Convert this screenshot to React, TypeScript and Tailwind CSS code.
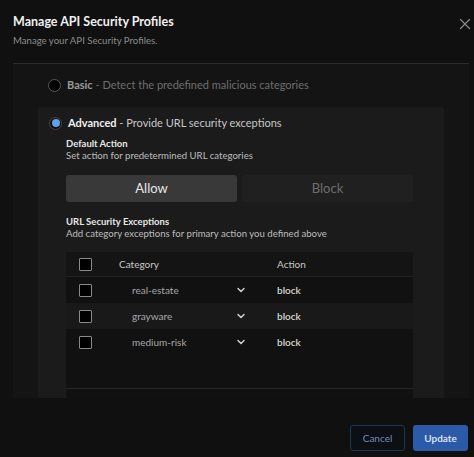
import { ChevronDown, X } from "lucide-react";

const rows = [
  { name: "real-estate", action: "block", bg: "bg-[#111111]" },
  { name: "grayware", action: "block", bg: "bg-[#191919]" },
  { name: "medium-risk", action: "block", bg: "bg-[#111111]" },
];

function Checkbox() {
  return <span className="block w-[13px] h-[13px] border border-[#8a8a8a] bg-black rounded-[1px]" />;
}

export default function App() {
  return (
    <div className="w-[474px] h-[457px] bg-[#101010] text-white flex flex-col overflow-hidden font-['Lato','Open_Sans',sans-serif]">
      <div className="shrink-0 flex items-start justify-between pl-[13px] pr-0 pt-[13px]">
        <div>
          <h1 className="text-[12.5px] font-bold leading-[18px] text-[#f0f0f0]">Manage API Security Profiles</h1>
          <p className="text-[9.6px] leading-[14px] mt-[3px] text-[#8c8c8c]">Manage your API Security Profiles.</p>
        </div>
        <X size={18} strokeWidth={1.6} className="text-[#8a8a8a] mt-[2px]" />
      </div>

      <div className="shrink-0 mt-[15px] ml-[13px] mr-[5px] h-[335px] border-t border-[#2c2c2c] bg-[#141414] flex flex-col overflow-hidden">
        <div className="shrink-0 flex items-center gap-[6px] pl-[35px] h-[43px]">
          <span className="w-[13px] h-[13px] rounded-full bg-black border border-[#5a5a5a]" />
          <span className="text-[11px] text-[#6e6e6e]">
            <span className="font-bold text-[#9a9a9a]">Basic</span> - Detect the predefined malicious categories
          </span>
        </div>

        <div className="shrink-0 ml-[25px] mr-[25px] h-[300px] bg-[#1b1b1b] rounded-t-[3px] pt-[8px] flex flex-col">
          <div className="shrink-0 flex items-center gap-[6px] pl-[11px] h-[16px]">
            <span className="w-[13px] h-[13px] rounded-full border-[1.5px] border-[#5a4432] bg-[#0d0d0d] flex items-center justify-center">
              <span className="w-[8px] h-[8px] rounded-full bg-[#5aa2f2]" />
            </span>
            <span className="text-[11px] text-[#c8c8c8]">
              <span className="font-bold text-[#f0f0f0]">Advanced</span> - Provide URL security exceptions
            </span>
          </div>

          <div className="pl-[28px] pr-[31px] mt-[6px]">
            <div className="text-[9.5px] font-bold leading-[13px] text-[#e6e6e6]">Default Action</div>
            <div className="text-[9.6px] leading-[12px] text-[#bdbdbd]">Set action for predetermined URL categories</div>

            <div className="mt-[13px] flex gap-[5px] h-[27px]">
              <div className="flex-1 rounded-[3px] bg-[#393939] flex items-center justify-center text-[13px] text-[#e8e8e8]">Allow</div>
              <div className="flex-1 rounded-[3px] bg-[#202020] flex items-center justify-center text-[13px] text-[#6e6e6e]">Block</div>
            </div>

            <div className="mt-[13px] text-[9.5px] font-bold leading-[13px] text-[#e6e6e6]">URL Security Exceptions</div>
            <div className="text-[9.6px] leading-[12px] text-[#bdbdbd]">Add category exceptions for primary action you defined above</div>

            <div className="mt-[12px] bg-[#111111] h-[150px] flex flex-col">
              <div className="shrink-0 flex items-center h-[25px] bg-[#141414] border-b border-[#222]">
                <span className="pl-[13px] w-[53px]"><Checkbox /></span>
                <span className="w-[158px] text-[10px] text-[#c8c8c8]">Category</span>
                <span className="text-[10px] text-[#c8c8c8]">Action</span>
              </div>
              {rows.map((r) => (
                <div key={r.name} className={`shrink-0 flex items-center h-[26px] ${r.bg}`}>
                  <span className="pl-[13px] w-[66px]"><Checkbox /></span>
                  <span className="w-[103px] text-[10px] text-[#a8a8a8]">{r.name}</span>
                  <span className="w-[42px]"><ChevronDown size={12} strokeWidth={3} className="text-[#d0d0d0]" /></span>
                  <span className="text-[10px] font-semibold text-[#d8d8d8]">{r.action}</span>
                </div>
              ))}
              <div className="h-[33px] shrink-0" />
              <div className="border-t border-[#262626] h-[10px] shrink-0" />
            </div>
          </div>
        </div>
      </div>

      <div className="shrink-0 flex justify-end gap-[8px] pr-[6px] mt-[27px]">
        <button className="w-[55px] h-[26px] rounded-[3px] border border-[#1f3556] bg-[#0c0f14] text-[10px] text-[#6f8db8]">Cancel</button>
        <button className="w-[55px] h-[26px] rounded-[3px] bg-[#2a5aa8] text-[10px] font-semibold text-[#e4ecf8]">Update</button>
      </div>
    </div>
  );
}
